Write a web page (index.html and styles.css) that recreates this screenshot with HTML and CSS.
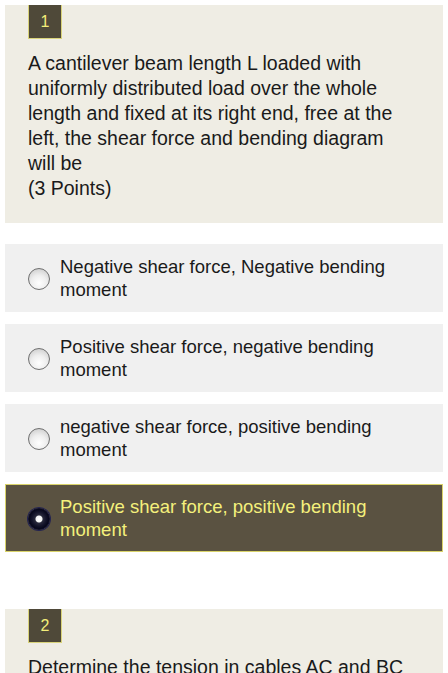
FILE: index.html
```html
<!DOCTYPE html>
<html>
<head>
<meta charset="utf-8">
<link rel="stylesheet" href="styles.css">
</head>
<body>
<div class="page">
  <section class="question">
    <div class="badge">1</div>
    <p class="qtext">A cantilever beam length L loaded with uniformly distributed load over the whole length and fixed at its right end, free at the left, the shear force and bending diagram will be<br>(3 Points)</p>
  </section>
  <div class="options">
    <label class="option"><span class="radio"></span><span class="otext">Negative shear force, Negative bending moment</span></label>
    <label class="option"><span class="radio"></span><span class="otext">Positive shear force, negative bending moment</span></label>
    <label class="option"><span class="radio"></span><span class="otext">negative shear force, positive bending moment</span></label>
    <label class="option selected"><span class="radio on"></span><span class="otext">Positive shear force, positive bending moment</span></label>
  </div>
  <section class="question q2">
    <div class="badge">2</div>
    <p class="qtext">Determine the tension in cables AC and BC</p>
  </section>
</div>
</body>
</html>
```
FILE: styles.css
```css
html, body {
  margin: 0;
  padding: 0;
  background: #ffffff;
}
body {
  font-family: "Liberation Sans", Arial, sans-serif;
  color: #1a1a1a;
}
.page {
  padding: 5px;
}
.question {
  background: #efede4;
  padding: 0 38px 22px 23px;
}
.badge {
  width: 32px;
  height: 33px;
  background: #4f4939;
  border: 1px solid #d9d37a;
  border-top: none;
  color: #f3ee7a;
  font-size: 16px;
  line-height: 33px;
  text-align: center;
}
.qtext {
  margin: 12px 0 0 0;
  font-size: 19.5px;
  line-height: 25px;
}
.options {
  margin-top: 21px;
  display: flex;
  flex-direction: column;
  gap: 12px;
}
.option {
  display: flex;
  align-items: center;
  gap: 10px;
  background: #f0f0f0;
  padding: 11px 50px 11px 23px;
  min-height: 46px;
}
.otext {
  font-size: 18.5px;
  line-height: 23px;
}
.radio {
  flex: none;
  width: 20px;
  height: 20px;
  border-radius: 50%;
  border: 1px solid #6f6f6f;
  background: radial-gradient(circle at 50% 70%, #ffffff 0%, #eeeeee 45%, #c4c4c4 100%);
  margin-top: 2px;
}
.radio.on {
  border: 1px solid #0e0e2a;
  background: radial-gradient(circle at 50% 50%, #ffffff 0, #f2f2f2 3px, #2a2a3c 4px, #14142a 7px, #050518 10px);
  box-shadow: 0 0 0 1px #232350;
}
.option.selected {
  background: #5a5241;
  border: 1px solid #d9d36a;
  padding: 10px 49px 10px 22px;
}
.option.selected .otext {
  color: #f4f07c;
}
.q2 {
  margin-top: 57px;
}
```
